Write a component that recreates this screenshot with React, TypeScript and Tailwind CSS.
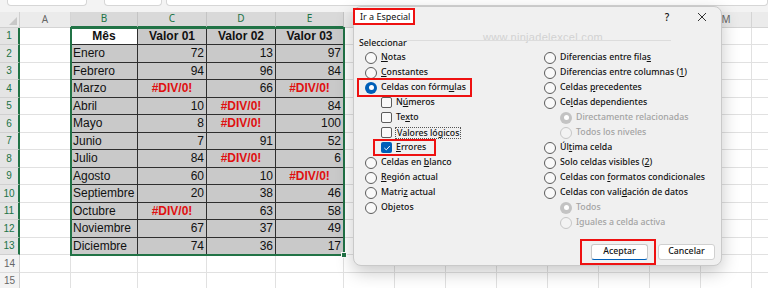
import React from 'react';

const ERR = '#DIV/0!';

type Val = number | string;

const rows: [string, Val, Val, Val][] = [
  ['Enero', 72, 13, 97],
  ['Febrero', 94, 96, 84],
  ['Marzo', ERR, 66, ERR],
  ['Abril', 10, ERR, 84],
  ['Mayo', 8, ERR, 100],
  ['Junio', 7, 91, 52],
  ['Julio', 84, ERR, 6],
  ['Agosto', 60, 10, ERR],
  ['Septiembre', 20, 38, 46],
  ['Octubre', ERR, 63, 58],
  ['Noviembre', 67, 37, 49],
  ['Diciembre', 74, 36, 17],
];

// F..L lie under the dialog, so their letters are never seen
const extraCols = ['', '', '', '', '', '', '', 'M', ''];
const tableCols = [
  { letter: 'B', w: 'w-[67px]' },
  { letter: 'C', w: 'w-[69px]' },
  { letter: 'D', w: 'w-[69px]' },
  { letter: 'E', w: 'w-[68px]' },
];

function RowHeader({ n, selected }: { n: number; selected: boolean }) {
  return (
    <div
      className={`w-5 shrink-0 flex items-center justify-center text-[10px] border-b ${
        selected
          ? 'bg-[#e4e4e4] text-[#217346] border-b-[#d0d0d0] border-r-2 border-r-[#217346]'
          : 'bg-[#f3f3f3] text-[#666] border-b-[#dcdcdc] border-r border-r-[#d0d0d0]'
      }`}
    >
      {n}
    </div>
  );
}

function BlankCell({ w }: { w: string }) {
  return <div className={`${w} shrink-0 bg-white border-r border-b border-[#e1e1e1]`} />;
}

function ValueCell({ w, v }: { w: string; v: Val }) {
  if (v === ERR) {
    return (
      <div className={`${w} shrink-0 flex items-center justify-center bg-[#c9c9c9] border-r border-b border-[#2e2e2e] font-bold text-[#e01010]`}>
        {v}
      </div>
    );
  }
  return (
    <div className={`${w} shrink-0 flex items-center justify-end pr-[2px] bg-[#c9c9c9] border-r border-b border-[#2e2e2e]`}>
      {v}
    </div>
  );
}

function Sheet() {
  return (
    <div className="relative font-['Liberation_Sans',Arial,sans-serif] text-[12px] text-[#111]">
      {/* remains of name box / formula bar */}
      <div className="h-3 bg-[#f3f3f3] flex items-start">
        <div className="ml-[7px] w-[80px] h-[6px] bg-white border border-t-0 border-[#d6d6d6] rounded-b-[4px]" />
        <div className="ml-[17px] w-[58px] h-[6px] bg-white border border-t-0 border-[#d6d6d6] rounded-b-[4px]" />
        <div className="ml-[4px] flex-1 h-[6px] bg-white border border-t-0 border-[#d6d6d6] rounded-b-[4px]" />
      </div>

      {/* column letters */}
      <div className="flex h-[15.5px] text-[10px] font-['Noto_Sans',sans-serif]">
        <div className="w-5 shrink-0 bg-[#ebebeb] border-r border-b border-[#d0d0d0] flex items-end justify-end p-[2px]">
          <svg viewBox="0 0 8 8" className="w-[8px] h-[8px]">
            <path d="M8 0 L8 8 L0 8 Z" fill="#c8c8c8" />
          </svg>
        </div>
        <div className="w-[51px] shrink-0 bg-[#ebebeb] border-r border-b border-[#d4d4d4] flex items-center justify-center text-[#666]">A</div>
        {tableCols.map((c) => (
          <div
            key={c.letter}
            className={`${c.w} shrink-0 bg-[#d9d9d9] border-r border-r-[#c4c4c4] border-b-2 border-b-[#217346] flex items-center justify-center text-[#217346]`}
          >
            {c.letter}
          </div>
        ))}
        {extraCols.map((l, i) => (
          <div key={i} className="w-[51px] shrink-0 bg-[#ebebeb] border-r border-b border-[#d4d4d4] flex items-center justify-center text-[#666]">
            {l}
          </div>
        ))}
      </div>

      {/* row 1: headers of the table */}
      <div className="flex h-[17.5px]">
        <RowHeader n={1} selected />
        <BlankCell w="w-[51px]" />
        <div className="w-[67px] shrink-0 flex items-center justify-center bg-white border-r border-b border-[#2e2e2e] font-bold">Mês</div>
        <div className="w-[69px] shrink-0 flex items-center justify-center bg-[#c9c9c9] border-r border-b border-[#2e2e2e] font-bold">Valor 01</div>
        <div className="w-[69px] shrink-0 flex items-center justify-center bg-[#c9c9c9] border-r border-b border-[#2e2e2e] font-bold">Valor 02</div>
        <div className="w-[68px] shrink-0 flex items-center justify-center bg-[#c9c9c9] border-r border-b border-[#2e2e2e] font-bold">Valor 03</div>
        {extraCols.map((l, i) => (
          <BlankCell key={i} w="w-[51px]" />
        ))}
      </div>

      {rows.map((r, i) => (
        <div key={r[0]} className="flex h-[17.5px]">
          <RowHeader n={i + 2} selected />
          <BlankCell w="w-[51px]" />
          <div className="w-[67px] shrink-0 flex items-center pl-[2px] bg-[#c9c9c9] border-r border-b border-[#2e2e2e]">{r[0]}</div>
          <ValueCell w="w-[69px]" v={r[1]} />
          <ValueCell w="w-[69px]" v={r[2]} />
          <ValueCell w="w-[68px]" v={r[3]} />
          {extraCols.map((l, j) => (
            <BlankCell key={j} w="w-[51px]" />
          ))}
        </div>
      ))}

      {[14, 15].map((n) => (
        <div key={n} className="flex h-[17.5px]">
          <RowHeader n={n} selected={false} />
          <BlankCell w="w-[51px]" />
          {tableCols.map((c) => (
            <BlankCell key={c.letter} w={c.w} />
          ))}
          {extraCols.map((l, j) => (
            <BlankCell key={j} w="w-[51px]" />
          ))}
        </div>
      ))}

      {/* selection outline B1:E13 */}
      <div className="absolute left-[70px] top-[26.5px] w-[275px] h-[229.5px] border-2 border-[#217346] pointer-events-none" />
      <div className="absolute left-[341px] top-[252px] w-[6px] h-[6px] bg-[#217346] border border-white" />
    </div>
  );
}

function Radio({ checked, disabled }: { checked?: boolean; disabled?: boolean }) {
  if (checked) {
    return (
      <span className={`w-3 h-3 shrink-0 rounded-full flex items-center justify-center ${disabled ? 'bg-[#c3c3c3]' : 'bg-[#005fb8]'}`}>
        <span className="w-[5px] h-[5px] rounded-full bg-white" />
      </span>
    );
  }
  return (
    <span
      className={`w-3 h-3 shrink-0 rounded-full border ${disabled ? 'border-[#c6c6c6] bg-[#f3f3f3]' : 'border-[#5c5c5c] bg-[#f9f9f9]'}`}
    />
  );
}

function Check({ checked }: { checked?: boolean }) {
  if (checked) {
    return (
      <span className="w-[11px] h-[11px] shrink-0 rounded-[2px] bg-[#005fb8] flex items-center justify-center">
        <svg viewBox="0 0 10 10" className="w-[8px] h-[8px]">
          <path d="M2 5.3 L4.1 7.3 L8.2 2.9" stroke="white" strokeWidth="1.2" fill="none" strokeLinecap="round" strokeLinejoin="round" />
        </svg>
      </span>
    );
  }
  return <span className="w-[11px] h-[11px] shrink-0 rounded-[2px] border border-[#5c5c5c] bg-[#f9f9f9]" />;
}

function Opt({ children, indent, check, checked, disabled }: {
  children: React.ReactNode;
  indent?: boolean;
  check?: boolean;
  checked?: boolean;
  disabled?: boolean;
}) {
  return (
    <div className={`flex items-center h-[15px] gap-[4px] ${indent ? 'pl-[16px]' : ''} ${disabled ? 'text-[#a3a3a3]' : 'text-[#111]'}`}>
      {check ? <Check checked={checked} /> : <Radio checked={checked} disabled={disabled} />}
      <span className="whitespace-nowrap">{children}</span>
    </div>
  );
}

function RedBox({ className }: { className: string }) {
  return <span className={`absolute border-2 border-[#ee1111] pointer-events-none ${className}`} />;
}

function Dialog() {
  return (
    <div className="absolute left-[353px] top-[6px] w-[369px] h-[260px] rounded-[8px] bg-[#f0f0f0] border border-[#c9c9c9] shadow-[0_6px_18px_rgba(0,0,0,0.22)] font-['Noto_Sans',sans-serif] font-medium text-[8.75px] text-[#111]">
      {/* title bar */}
      <div className="flex items-start h-[22px]">
        <div className="mt-[1px] -ml-px h-[17px] w-[62px] pl-[5px] border-2 border-[#ee1111] bg-white flex items-center text-[9px] font-normal whitespace-nowrap">Ir a Especial</div>
        <div className="ml-auto flex items-center gap-[24px] pr-[14px] h-[20px]">
          <span className="w-3 text-center text-[10px]">?</span>
          <svg viewBox="0 0 10 10" className="w-[10px] h-[10px]">
            <path d="M1 1 L9 9 M9 1 L1 9" stroke="#333" strokeWidth="1" />
          </svg>
        </div>
      </div>

      <div className="absolute left-[129px] top-[22px] text-[11px] font-normal tracking-[0.3px] text-[#d2d2d2] font-['Liberation_Sans',Arial,sans-serif]">
        www.ninjadelexcel.com
      </div>
      <div className="absolute left-[52px] top-[33px] w-[265px] h-px bg-[#dcdcdc]" />

      <div className="pl-[5px] mt-[7px] h-[14px] leading-[14px]">Seleccionar</div>

      <div className="flex pl-[11px]">
        <div className="w-[179px] flex flex-col">
          <Opt><u>N</u>otas</Opt>
          <Opt><u>C</u>onstantes</Opt>
          <div className="relative self-start">
            <Opt checked>Celdas con fórm<u>u</u>las</Opt>
            <RedBox className="-left-[8px] -right-[6px] -top-[2px] -bottom-[2px]" />
          </div>
          <Opt indent check>N<u>ú</u>meros</Opt>
          <Opt indent check>Te<u>x</u>to</Opt>
          <div className="flex items-center h-[15px] gap-[3px] pl-[16px]">
            <Check />
            <span className="border border-dotted border-[#555] px-[1px] leading-[10px] whitespace-nowrap">Valores lógicos</span>
          </div>
          <div className="relative self-start">
            <Opt indent check checked><u>E</u>rrores</Opt>
            <RedBox className="left-[8px] -right-[10px] -top-[1px] -bottom-[1px]" />
          </div>
          <Opt>Celdas en <u>b</u>lanco</Opt>
          <Opt><u>R</u>egión actual</Opt>
          <Opt>Matri<u>z</u> actual</Opt>
          <Opt>Ob<u>j</u>etos</Opt>
        </div>
        <div className="flex-1 flex flex-col">
          <Opt>Diferencias entre fila<u>s</u></Opt>
          <Opt>Diferencias entre columnas (<u>1</u>)</Opt>
          <Opt>Celdas <u>p</u>recedentes</Opt>
          <Opt>Ce<u>l</u>das dependientes</Opt>
          <Opt indent checked disabled>Directamente relacionadas</Opt>
          <Opt indent disabled>Todos los niveles</Opt>
          <Opt>Úl<u>t</u>ima celda</Opt>
          <Opt>Solo celdas visibles (<u>2</u>)</Opt>
          <Opt>Celdas con <u>f</u>ormatos condicionales</Opt>
          <Opt>Celdas con vali<u>d</u>ación de datos</Opt>
          <Opt indent checked disabled>Todos</Opt>
          <Opt indent disabled>Iguales a celda activa</Opt>
        </div>
      </div>

      <div className="flex justify-end gap-[10px] pr-[6px] mt-[14px]">
        <div className="relative">
          <button className="w-[57px] h-[16px] rounded-[3px] bg-white border border-[#c8c8c8] border-b-[#005fb8] text-[#111] flex items-center justify-center">
            Aceptar
          </button>
          <RedBox className="-left-[11px] -right-[8px] -top-[5px] -bottom-[5px]" />
        </div>
        <button className="w-[57px] h-[16px] rounded-[3px] bg-white border border-[#d0d0d0] text-[#111] flex items-center justify-center">
          Cancelar
        </button>
      </div>
    </div>
  );
}

export default function App() {
  return (
    <div className="relative w-[768px] h-[288px] overflow-hidden bg-white">
      <Sheet />
      <Dialog />
    </div>
  );
}
